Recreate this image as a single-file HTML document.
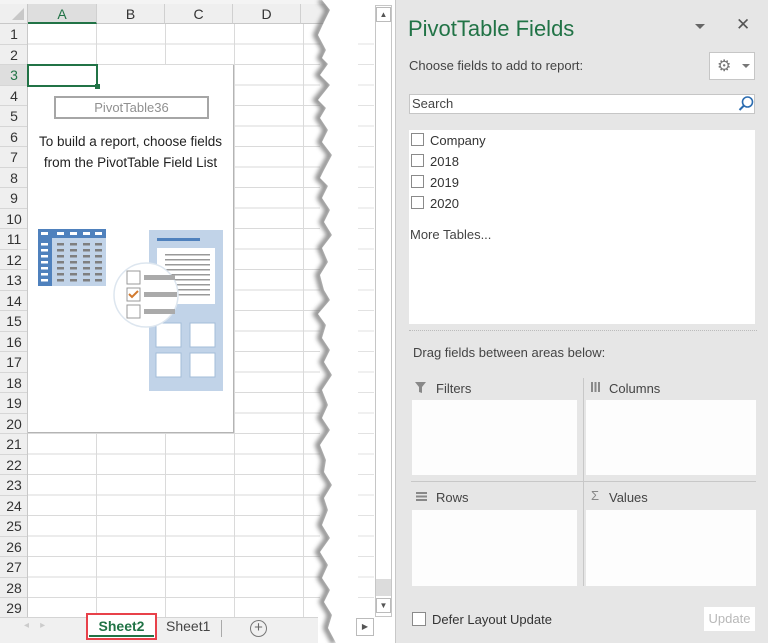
<!DOCTYPE html>
<html><head><meta charset="utf-8"><style>
*{margin:0;padding:0;box-sizing:border-box}
body{width:768px;height:643px;overflow:hidden;background:#fff;position:relative;font-family:"Liberation Sans",sans-serif;}
.a{position:absolute}
.rn{position:absolute;left:0;width:28px;text-align:center;font-size:14px;color:#333;height:20.5px;line-height:20.5px;background:#efefef;border-bottom:1px solid #d6d6d6}
.ch{position:absolute;top:4px;height:20px;line-height:20px;text-align:center;font-size:14px;color:#333;background:#efefef;border-right:1px solid #d0d0d0;border-bottom:1px solid #c8c8c8}
.cb{position:absolute;width:13px;height:13px;border:1px solid #8a8a8a;background:#fff}
.it{position:absolute;left:430px;font-size:13px;color:#333}
.box{position:absolute;background:#fdfdfd}
.hd{position:absolute;font-size:13px;color:#444}
</style></head><body>
<div class="a" style="left:0;top:0;width:320px;height:4px;background:#f4f4f4"></div>
<div class="a" style="left:28px;top:24px;width:292px;height:593px;background-image:repeating-linear-gradient(to bottom,transparent 0,transparent 19.5px,#dadada 19.5px,#dadada 20.5px),repeating-linear-gradient(to right,transparent 0,transparent 68px,#dadada 68px,#dadada 69px)"></div>
<div class="a" style="left:0;top:4px;width:28px;height:20px;background:#efefef;border-right:1px solid #c8c8c8;border-bottom:1px solid #c8c8c8"><div style="position:absolute;right:3px;bottom:3px;width:0;height:0;border-left:12px solid transparent;border-bottom:12px solid #c8c8c8"></div></div>
<div class="ch" style="left:28px;width:69px;background:#dedede;color:#217346;border-bottom:2px solid #217346">A</div>
<div class="ch" style="left:97px;width:68px">B</div>
<div class="ch" style="left:165px;width:68px">C</div>
<div class="ch" style="left:233px;width:68px">D</div>
<div class="ch" style="left:301px;width:30px;border-right:none"></div>
<div class="rn" style="top:24px">1</div><div class="rn" style="top:44.5px">2</div><div class="rn" style="top:65px;background:#dedede;color:#217346">3</div><div class="rn" style="top:85.5px">4</div><div class="rn" style="top:106px">5</div><div class="rn" style="top:126.5px">6</div><div class="rn" style="top:147px">7</div><div class="rn" style="top:167.5px">8</div><div class="rn" style="top:188px">9</div><div class="rn" style="top:208.5px">10</div><div class="rn" style="top:229px">11</div><div class="rn" style="top:249.5px">12</div><div class="rn" style="top:270px">13</div><div class="rn" style="top:290.5px">14</div><div class="rn" style="top:311px">15</div><div class="rn" style="top:331.5px">16</div><div class="rn" style="top:352px">17</div><div class="rn" style="top:372.5px">18</div><div class="rn" style="top:393px">19</div><div class="rn" style="top:413.5px">20</div><div class="rn" style="top:434px">21</div><div class="rn" style="top:454.5px">22</div><div class="rn" style="top:475px">23</div><div class="rn" style="top:495.5px">24</div><div class="rn" style="top:516px">25</div><div class="rn" style="top:536.5px">26</div><div class="rn" style="top:557px">27</div><div class="rn" style="top:577.5px">28</div><div class="rn" style="top:598px">29</div>
<div class="a" style="left:27px;top:24px;width:1px;height:593px;background:#c8c8c8"></div>
<div class="a" style="left:28px;top:65px;width:206px;height:368px;background:#fff;border:1px solid #b4b4b4;border-left:none;border-top:none"></div>
<div class="a" style="left:27px;top:64px;width:71px;height:23px;border:2px solid #217346"></div>
<div class="a" style="left:95px;top:84px;width:5px;height:5px;background:#217346"></div>
<div class="a" style="left:54px;top:96px;width:155px;height:23px;border:2px solid #a6a6a6;text-align:center;font-size:13px;line-height:19px;color:#909090">PivotTable36</div>
<div class="a" style="left:28px;top:132px;width:205px;text-align:center;font-size:13.5px;line-height:20.5px;color:#222">To build a report, choose fields<br>from the PivotTable Field List</div>
<svg class="a" style="left:37px;top:229px" width="190" height="165">
<rect x="1" y="0" width="68" height="57" fill="#c1d3e8"/><rect x="1" y="0" width="68" height="9" fill="#4f81bd"/><rect x="1" y="0" width="14" height="57" fill="#4f81bd"/>
<g fill="#fff"><rect x="4" y="3" width="7" height="3"/><rect x="20" y="3" width="7" height="3"/><rect x="33" y="3" width="7" height="3"/><rect x="46" y="3" width="7" height="3"/><rect x="58" y="3" width="7" height="3"/>
<rect x="4" y="14" width="7" height="2.5"/><rect x="4" y="20" width="7" height="2.5"/><rect x="4" y="26" width="7" height="2.5"/><rect x="4" y="32" width="7" height="2.5"/><rect x="4" y="38" width="7" height="2.5"/><rect x="4" y="44" width="7" height="2.5"/><rect x="4" y="50" width="7" height="2.5"/></g>
<g fill="#7f7f7f"><rect x="20" y="14" width="7" height="2.5"/><rect x="33" y="14" width="7" height="2.5"/><rect x="46" y="14" width="7" height="2.5"/><rect x="58" y="14" width="7" height="2.5"/><rect x="20" y="20" width="7" height="2.5"/><rect x="33" y="20" width="7" height="2.5"/><rect x="46" y="20" width="7" height="2.5"/><rect x="58" y="20" width="7" height="2.5"/><rect x="20" y="26" width="7" height="2.5"/><rect x="33" y="26" width="7" height="2.5"/><rect x="46" y="26" width="7" height="2.5"/><rect x="58" y="26" width="7" height="2.5"/><rect x="20" y="32" width="7" height="2.5"/><rect x="33" y="32" width="7" height="2.5"/><rect x="46" y="32" width="7" height="2.5"/><rect x="58" y="32" width="7" height="2.5"/><rect x="20" y="38" width="7" height="2.5"/><rect x="33" y="38" width="7" height="2.5"/><rect x="46" y="38" width="7" height="2.5"/><rect x="58" y="38" width="7" height="2.5"/><rect x="20" y="44" width="7" height="2.5"/><rect x="33" y="44" width="7" height="2.5"/><rect x="46" y="44" width="7" height="2.5"/><rect x="58" y="44" width="7" height="2.5"/><rect x="20" y="50" width="7" height="2.5"/><rect x="33" y="50" width="7" height="2.5"/><rect x="46" y="50" width="7" height="2.5"/><rect x="58" y="50" width="7" height="2.5"/></g>
<rect x="112" y="1" width="74" height="161" fill="#c1d3e8"/><rect x="120" y="9" width="43" height="3" fill="#4f81bd"/><rect x="120" y="53" width="43" height="3" fill="#4f81bd"/>
<rect x="120" y="19" width="58" height="56" fill="#fff"/>
<g fill="#999"><rect x="128" y="25" width="45" height="1.5"/><rect x="128" y="30" width="45" height="1.5"/><rect x="128" y="35" width="45" height="1.5"/><rect x="128" y="40" width="45" height="1.5"/><rect x="128" y="45" width="45" height="1.5"/><rect x="128" y="50" width="45" height="1.5"/><rect x="128" y="55" width="45" height="1.5"/><rect x="128" y="60" width="45" height="1.5"/><rect x="128" y="65" width="45" height="1.5"/></g>
<rect x="119" y="94" width="25" height="24" fill="#fff" stroke="#a3bcd9"/><rect x="153" y="94" width="25" height="24" fill="#fff" stroke="#a3bcd9"/><rect x="119" y="124" width="25" height="24" fill="#fff" stroke="#a3bcd9"/><rect x="153" y="124" width="25" height="24" fill="#fff" stroke="#a3bcd9"/>
<circle cx="109" cy="66" r="32" fill="#fff" stroke="#dde6ef" stroke-width="1.5"/>
<rect x="90" y="42" width="13" height="13" fill="#fff" stroke="#999"/><rect x="90" y="59" width="13" height="13" fill="#fff" stroke="#999"/><rect x="90" y="76" width="13" height="13" fill="#fff" stroke="#999"/>
<path d="M92 65 l3 3 l6 -6" fill="none" stroke="#d27a2f" stroke-width="2"/>
<rect x="107" y="46" width="31" height="5" fill="#aaa"/><rect x="107" y="63" width="33" height="5" fill="#aaa"/><rect x="107" y="80" width="31" height="5" fill="#aaa"/>
</svg>
<svg class="a" style="left:300px;top:0" width="78" height="643">
<defs><filter id="b" x="-50%" y="-5%" width="200%" height="110%"><feGaussianBlur stdDeviation="2"/></filter></defs>
<polyline fill="none" stroke="#777" stroke-width="6" filter="url(#b)" opacity=".8" points="20,0 28,10 22,22 16,35 24,50 20,58 26,64 18,75 28,85 16,100 24,108 18,118 26,130 20,142 30,155 22,170 18,178 26,186 20,198 28,210 22,222 30,235 20,248 26,262 18,275 22,290 28,300 16,314 24,325 20,338 28,350 22,362 30,375 20,390 26,405 20,418 28,430 18,445 24,460 22,472 30,485 22,498 26,510 20,525 28,538 18,552 26,565 20,578 28,590 22,602 30,615 26,628 34,643"/>
<polygon fill="#fff" points="22,0 30,10 24,22 18,35 26,50 22,58 28,64 20,75 30,85 18,100 26,108 20,118 28,130 22,142 32,155 24,170 20,178 28,186 22,198 30,210 24,222 32,235 22,248 28,262 20,275 24,290 30,300 18,314 26,325 22,338 30,350 24,362 32,375 22,390 28,405 22,418 30,430 20,445 26,460 24,472 32,485 24,498 28,510 22,525 30,538 20,552 28,565 22,578 30,590 24,602 32,615 28,628 36,643 78,643 78,0"/>
</svg>
<div class="a" style="left:358px;top:24px;width:16px;height:593px;background-image:repeating-linear-gradient(to bottom,transparent 0,transparent 19.5px,#e2e2e2 19.5px,#e2e2e2 20.5px)"></div>
<div class="a" style="left:0;top:617px;width:318px;height:26px;background:#f0f0f0;border-top:1px solid #d4d4d4"></div>
<div class="a" style="left:24px;top:620px;font-size:10px;color:#ccc">◂&nbsp;&nbsp;&nbsp;&nbsp;▸</div>
<div class="a" style="left:86px;top:613px;width:71px;height:27px;border:2px solid #e8414a;background:#fff"></div>
<div class="a" style="left:89px;top:615px;width:65px;height:22px;border-bottom:2px solid #217346;text-align:center;font-size:14px;font-weight:bold;color:#217346;line-height:22px">Sheet2</div>
<div class="a" style="left:166px;top:618px;font-size:14px;color:#444">Sheet1</div>
<div class="a" style="left:221px;top:620px;width:1px;height:17px;background:#aaa"></div>
<div class="a" style="left:250px;top:620px;width:17px;height:17px;border:1.5px solid #777;border-radius:50%;text-align:center;font-size:15px;line-height:13px;color:#666">+</div>
<div class="a" style="left:356px;top:618px;width:18px;height:18px;border:1px solid #bbb;background:#fff;font-size:8px;color:#555;text-align:center;line-height:16px">▶</div>
<div class="a" style="left:375px;top:5px;width:17px;height:612px;background:#fff;border:1px solid #c6c6c6"></div>
<div class="a" style="left:376px;top:7px;width:15px;height:15px;border:1px solid #bbb;font-size:8px;color:#555;text-align:center;line-height:13px">▲</div>
<div class="a" style="left:376px;top:579px;width:15px;height:17px;background:#dcdcdc"></div>
<div class="a" style="left:376px;top:598px;width:15px;height:15px;border:1px solid #bbb;font-size:8px;color:#555;text-align:center;line-height:13px">▼</div>
<div class="a" style="left:395px;top:0;width:373px;height:643px;background:#e6e6e6;border-left:1px solid #c8c8c8"></div>
<div class="a" style="left:408px;top:16px;font-size:22px;color:#217346">PivotTable Fields</div>
<div class="a" style="left:695px;top:24px;width:0;height:0;border-left:5px solid transparent;border-right:5px solid transparent;border-top:5px solid #666"></div>
<div class="a" style="left:736px;top:15px;font-size:17px;color:#555">✕</div>
<div class="a" style="left:409px;top:58px;font-size:13px;color:#444">Choose fields to add to report:</div>
<div class="a" style="left:709px;top:52px;width:46px;height:28px;background:#fff;border:1px solid #c6c6c6"></div>
<div class="a" style="left:717px;top:56px;font-size:16px;color:#777">⚙</div>
<div class="a" style="left:742px;top:64px;width:0;height:0;border-left:4px solid transparent;border-right:4px solid transparent;border-top:4px solid #777"></div>
<div class="a" style="left:409px;top:94px;width:346px;height:20px;background:#fff;border:1px solid #c6c6c6;font-size:13px;color:#444;line-height:18px;padding-left:2px">Search</div>
<svg class="a" style="left:737px;top:95px" width="18" height="18"><circle cx="10.5" cy="7" r="5" fill="none" stroke="#2b6cb0" stroke-width="1.6"/><path d="M7 10.5 L2.5 15" stroke="#2b6cb0" stroke-width="2"/></svg>
<div class="a" style="left:409px;top:130px;width:346px;height:194px;background:#fff"></div>
<div class="cb" style="left:411px;top:133px"></div><div class="it" style="top:133px">Company</div>
<div class="cb" style="left:411px;top:154px"></div><div class="it" style="top:154px">2018</div>
<div class="cb" style="left:411px;top:175px"></div><div class="it" style="top:175px">2019</div>
<div class="cb" style="left:411px;top:196px"></div><div class="it" style="top:196px">2020</div>
<div class="a" style="left:410px;top:227px;font-size:13px;color:#444">More Tables...</div>
<div class="a" style="left:409px;top:330px;width:348px;border-top:1px dotted #bbb"></div>
<div class="a" style="left:413px;top:345px;font-size:13px;color:#444">Drag fields between areas below:</div>
<div class="a" style="left:583px;top:378px;width:1px;height:208px;background:#c8c8c8"></div>
<div class="a" style="left:411px;top:481px;width:345px;height:1px;background:#c8c8c8"></div>
<svg class="a" style="left:415px;top:382px" width="12" height="12"><path d="M0 0H11L7 5V11L4 10V5Z" fill="#888"/></svg>
<div class="hd" style="left:436px;top:381px">Filters</div>
<svg class="a" style="left:591px;top:382px" width="10" height="10"><rect x="0" y="0" width="2" height="10" fill="#888"/><rect x="3.5" y="0" width="2" height="10" fill="#888"/><rect x="7" y="0" width="2" height="10" fill="#888"/></svg>
<div class="hd" style="left:609px;top:381px">Columns</div>
<svg class="a" style="left:416px;top:492px" width="11" height="9"><rect y="0" width="11" height="2" fill="#888"/><rect y="3.5" width="11" height="2" fill="#888"/><rect y="7" width="11" height="2" fill="#888"/></svg>
<div class="hd" style="left:436px;top:490px">Rows</div>
<div class="hd" style="left:591px;top:488px;color:#888">Σ</div>
<div class="hd" style="left:609px;top:490px">Values</div>
<div class="box" style="left:412px;top:400px;width:165px;height:75px"></div>
<div class="box" style="left:586px;top:400px;width:170px;height:75px"></div>
<div class="box" style="left:412px;top:510px;width:165px;height:76px"></div>
<div class="box" style="left:586px;top:510px;width:170px;height:76px"></div>
<div class="cb" style="left:412px;top:612px;width:14px;height:14px"></div>
<div class="a" style="left:432px;top:612px;font-size:13px;color:#333">Defer Layout Update</div>
<div class="a" style="left:704px;top:607px;width:51px;height:24px;background:#fff;font-size:13px;color:#b8b8b8;text-align:center;line-height:24px">Update</div>
</body></html>
